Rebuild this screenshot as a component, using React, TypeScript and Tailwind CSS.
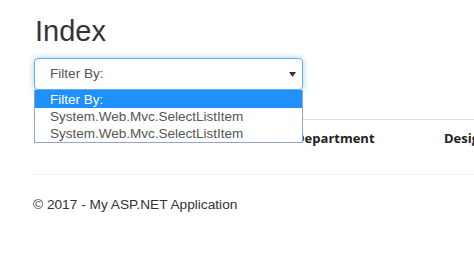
import { useState } from "react";

const options = ["Filter By:", "System.Web.Mvc.SelectListItem", "System.Web.Mvc.SelectListItem"];

const App = () => {
  const [active] = useState(0);

  return (
    <div className="min-h-screen overflow-hidden bg-white font-['Liberation_Sans',Arial,sans-serif] text-[#333]">
      <div className="pl-[33px]">
        {/* Title */}
        <h2 className="pt-[15px] pl-[2px] text-[29px] leading-[33px]">Index</h2>

        {/* Filter select, open */}
        <div className="relative mt-[10px] w-[270px] pl-[1px]">
          <div className="flex h-[32px] items-center justify-between rounded-[4px] border border-[#66afe9] bg-white pl-[15px] pr-[6px] text-[13.6px] text-[#555] shadow-[0_0_6px_rgba(102,175,233,0.6)]">
            <span>Filter By:</span>
            <svg width="7" height="5" viewBox="0 0 7 5">
              <path d="M0 0h7L3.5 5z" fill="#333" />
            </svg>
          </div>
          <ul className="absolute left-[1px] right-0 top-full z-10 border border-t-0 border-[#8fa6c4] bg-white text-[13.5px] leading-[17px] text-[#555]">
            {options.map((o, i) => (
              <li
                key={i}
                className={i === active ? "h-[18px] bg-[#1e90ff] pl-[15px] pt-[1px] text-white" : "h-[17px] pl-[15px]"}
              >
                {o}
              </li>
            ))}
          </ul>
        </div>

        {/* Table header */}
        <div className="mt-[29px] grid grid-cols-[254px_149px_1fr] border-t border-[#ddd] font-['Open_Sans',sans-serif] text-[13px] font-bold leading-[20px] text-[#222]">
          <div className="p-2" />
          <div className="p-2">Department</div>
          <div className="overflow-hidden p-2 whitespace-nowrap">Designation</div>
        </div>

        <hr className="mt-[18px] border-[#eee]" />

        <footer className="mt-[20px] text-[13.7px] leading-[20px]">
          <p>© 2017 - My ASP.NET Application</p>
        </footer>
      </div>
    </div>
  );
};

export default App;
